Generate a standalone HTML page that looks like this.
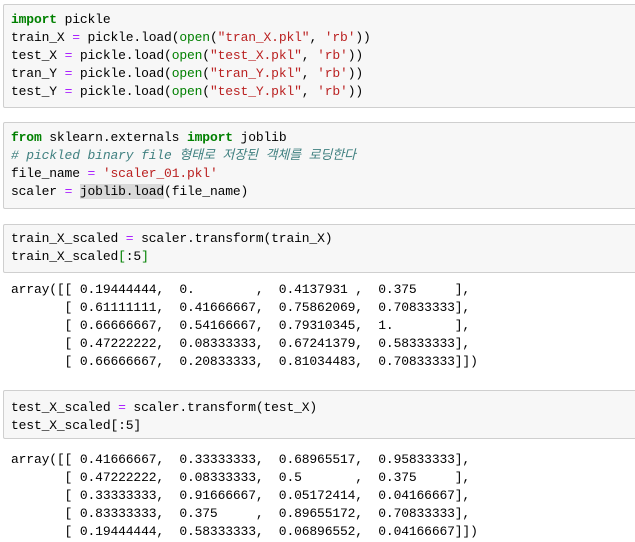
<!DOCTYPE html>
<html><head><meta charset="utf-8"><style>
body{margin:0;background:#fff;width:635px;height:542px;overflow:hidden;position:relative;font-family:"Liberation Mono","Noto Sans CJK KR",monospace;font-size:13px;letter-spacing:-0.15px;color:#000}
.cell{position:absolute;left:3px;width:640px;background:#f7f7f7;border:1px solid #cfcfcf;border-radius:2px;box-sizing:border-box}
pre{margin:0;font:inherit;line-height:18px;white-space:pre;position:absolute;left:11px}
.k{color:#008000;font-weight:bold}.o{color:#aa22ff}.b{color:#008000}.s{color:#ba2121}.c{color:#408080;font-style:italic}
.hl{background:#d9d9d9}
</style></head><body>
<div class="cell" style="top:4px;height:104px"></div>
<pre style="top:11px"><span class="k">import</span> pickle
train_X <span class="o">=</span> pickle.load(<span class="b">open</span>(<span class="s">"tran_X.pkl"</span>, <span class="s">'rb'</span>))
test_X <span class="o">=</span> pickle.load(<span class="b">open</span>(<span class="s">"test_X.pkl"</span>, <span class="s">'rb'</span>))
tran_Y <span class="o">=</span> pickle.load(<span class="b">open</span>(<span class="s">"tran_Y.pkl"</span>, <span class="s">'rb'</span>))
test_Y <span class="o">=</span> pickle.load(<span class="b">open</span>(<span class="s">"test_Y.pkl"</span>, <span class="s">'rb'</span>))</pre>
<div class="cell" style="top:122px;height:87px"></div>
<pre style="top:129px"><span class="k">from</span> sklearn.externals <span class="k">import</span> joblib
<span class="c"># pickled binary file 형태로 저장된 객체를 로딩한다</span>
file_name <span class="o">=</span> <span class="s">'scaler_01.pkl'</span>
scaler <span class="o">=</span> <span class="hl">joblib.load</span>(file_name)</pre>
<div class="cell" style="top:224px;height:49px"></div>
<pre style="top:230px">train_X_scaled <span class="o">=</span> scaler.transform(train_X)
train_X_scaled<span class="b">[</span>:5<span class="b">]</span></pre>
<pre style="top:281px">array([[ 0.19444444,  0.        ,  0.4137931 ,  0.375     ],
       [ 0.61111111,  0.41666667,  0.75862069,  0.70833333],
       [ 0.66666667,  0.54166667,  0.79310345,  1.        ],
       [ 0.47222222,  0.08333333,  0.67241379,  0.58333333],
       [ 0.66666667,  0.20833333,  0.81034483,  0.70833333]])</pre>
<div class="cell" style="top:390px;height:49px"></div>
<pre style="top:399px">test_X_scaled <span class="o">=</span> scaler.transform(test_X)
test_X_scaled[:5]</pre>
<pre style="top:451px">array([[ 0.41666667,  0.33333333,  0.68965517,  0.95833333],
       [ 0.47222222,  0.08333333,  0.5       ,  0.375     ],
       [ 0.33333333,  0.91666667,  0.05172414,  0.04166667],
       [ 0.83333333,  0.375     ,  0.89655172,  0.70833333],
       [ 0.19444444,  0.58333333,  0.06896552,  0.04166667]])</pre>
</body></html>
